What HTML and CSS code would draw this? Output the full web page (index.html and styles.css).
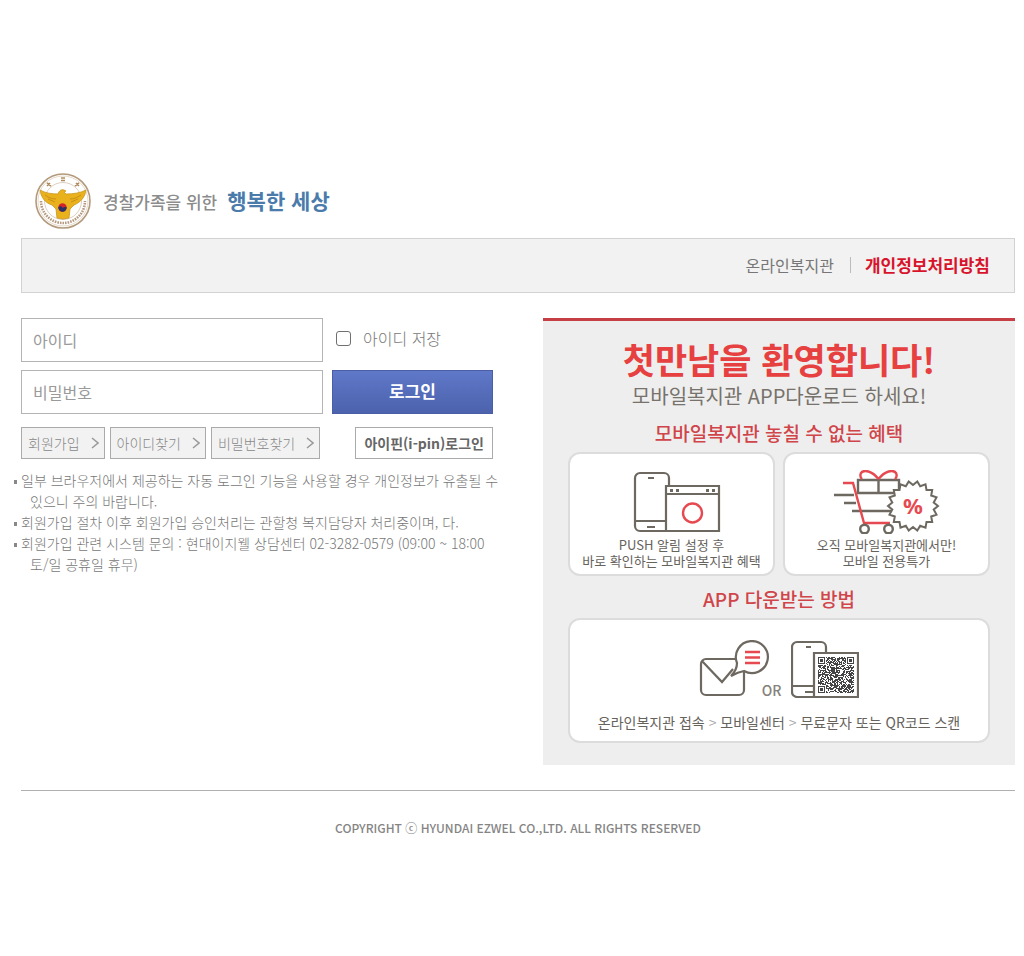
FILE: index.html
```html
<!DOCTYPE html>
<html lang="ko">
<head>
    <meta charset="UTF-8">
    <meta name="viewport" content="width=device-width, initial-scale=1.0">
    <title>경찰가족을 위한 행복한 세상</title>
    <link rel="stylesheet" href="styles.css">
</head>
<body>

    <header class="header">
        <h1 class="logo">
            <svg class="emblem" viewBox="0 0 56 56" aria-hidden="true">
                <circle cx="28" cy="28" r="27" fill="#fff" stroke="#b39a7c" stroke-width="1.6"/>
                <circle cx="28" cy="28" r="25" fill="none" stroke="#e6dac8" stroke-width="1"/>
                <circle cx="28" cy="28" r="18.5" fill="none" stroke="#dcd0c0" stroke-width="1"/>
                <path d="M6 28A22 22 0 0 0 50 28" fill="none" stroke="#b59a80" stroke-width="2.6" stroke-dasharray="1.6 1"/>
                <g fill="none" stroke="#b08a60" stroke-width="1.6">
                    <path d="M12 10l4 3M12 13l3-3M26 5h4M26 7.500h4M40 13l4-3M41 10l3 3"/>
                </g>
                <path d="M5 17c5 3 12 4 18 4 1-3 3-5 6-4l2 1-2 1 2 2c7 0 14-1 20-4-1 7-5 12-12 15l-4 4-1 9-6 1-6-1-1-9-4-4C10 30 6 24 5 17z" fill="#e9b21d" stroke="#c9951c" stroke-width=".8"/>
                <path d="M10 22c4 3 7 4 11 4M46 22c-4 3-8 4-11 4M13 26l7 3M43 26l-7 3" fill="none" stroke="#c98f16"/>
                <circle cx="27.500" cy="34.500" r="4.200" fill="#d2242b"/>
                <path d="M23.300 34.500a4.200 4.200 0 0 0 8.400 0c-2-2-3 1-4.200 0s-2-2-4.200 0z" fill="#2a3068"/>
            </svg>
            <span class="logo-text">경찰가족을 위한</span>
            <strong class="logo-name">행복한 세상</strong>
        </h1>
        <nav class="menu">
            <a href="#">온라인복지관</a>
            <a href="#" class="privacy">개인정보처리방침</a>
        </nav>
    </header>

    <main class="main">
        <section class="login">
            <form class="login-form">
                <input type="text" class="field" placeholder="아이디" aria-label="아이디">
                <label class="save-id"><input type="checkbox" class="check">아이디 저장</label>
                <input type="password" class="field" placeholder="비밀번호" aria-label="비밀번호">
                <button type="submit" class="btn-login">로그인</button>
            </form>

            <div class="links">
                <a href="#" class="btn-link">회원가입 <svg class="arrow" viewBox="0 0 8 12" aria-hidden="true"><path d="M1 1l6 5-6 5"/></svg></a>
                <a href="#" class="btn-link">아이디찾기 <svg class="arrow" viewBox="0 0 8 12" aria-hidden="true"><path d="M1 1l6 5-6 5"/></svg></a>
                <a href="#" class="btn-link">비밀번호찾기 <svg class="arrow" viewBox="0 0 8 12" aria-hidden="true"><path d="M1 1l6 5-6 5"/></svg></a>
                <button type="button" class="btn-ipin">아이핀(i-pin)로그인</button>
            </div>

            <ul class="notice">
                <li>일부 브라우저에서 제공하는 자동 로그인 기능을 사용할 경우 개인정보가 유출될 수 있으니 주의 바랍니다.</li>
                <li>회원가입 절차 이후 회원가입 승인처리는 관할청 복지담당자 처리중이며, 다.</li>
                <li>회원가입 관련 시스템 문의 : 현대이지웰 상담센터 02-3282-0579 (09:00 ~ 18:00 토/일 공휴일 휴무)</li>
            </ul>
        </section>

        <section class="promo">
            <h2 class="promo-title">첫만남을 환영합니다!</h2>
            <p class="promo-sub">모바일복지관 APP다운로드 하세요!</p>

            <h3 class="promo-head">모바일복지관 놓칠 수 없는 혜택</h3>
            <div class="cards">
                <div class="card">
                    <svg class="icon" width="98" height="62" viewBox="-10 0 98 62" aria-hidden="true">
                        <g fill="none" stroke="#6d6860" stroke-width="2.200">
                            <path d="M32 60H7a5 5 0 0 1-5-5V7a5 5 0 0 1 5-5h24a5 5 0 0 1 5 5v8M2 50h30M15 7h6M14 56h8"/>
                            <path d="M33 15h53v45H33zM33 23h53"/>
                        </g>
                        <path d="M37 18h3v3h-3zM43 18h3v3h-3zM73 18h3v3h-3zM79 18h3v3h-3z" fill="#6d6860"/>
                        <circle cx="59.500" cy="42" r="9.500" fill="none" stroke="#e64a50" stroke-width="2.400"/>
                    </svg>
                    <p>PUSH 알림 설정 후<br>바로 확인하는 모바일복지관 혜택</p>
                </div>
                <div class="card">
                    <svg class="icon" width="106" height="64" viewBox="0 0 106 64" aria-hidden="true">
                        <g fill="none" stroke="#6d6860" stroke-width="2.400">
                            <path d="M24 10h41v13H24zM44.500 10v13M0 25h20M10 33h12M18 41h40M24 23h36"/>
                        </g>
                        <path id="seal" fill="#fff" stroke="#6d6860" stroke-width="2"/>
                        <path d="M9 13h10l11 40h26" fill="none" stroke="#e64a50" stroke-width="2.400"/>
                        <path d="M44.500 9C38 1 30-1 27 3c-1 2-1 4 1 6M44.500 9C51 1 59-1 62 3c1 2 1 4-1 6" fill="none" stroke="#e64a50" stroke-width="2.400"/>
                        <circle cx="30.500" cy="59" r="4.300" fill="#fff" stroke="#6d6860" stroke-width="2.400"/>
                        <circle cx="54.500" cy="59" r="4.300" fill="#fff" stroke="#6d6860" stroke-width="2.400"/>
                        <text class="percent" x="79" y="44" text-anchor="middle">%</text>
                    </svg>
                    <p>오직 모바일복지관에서만!<br>모바일 전용특가</p>
                </div>
            </div>

            <h3 class="promo-head">APP 다운받는 방법</h3>
            <div class="card card-wide">
                <div class="ways">
                    <svg class="icon" width="72" height="58" viewBox="0 0 72 58" aria-hidden="true">
                        <g fill="none" stroke="#6d6860" stroke-width="2.200">
                            <path d="M38 19H7a5 5 0 0 0-5 5v26a5 5 0 0 0 5 5h33a5 5 0 0 0 5-5V29M3 21l20 21 11-13"/>
                            <path d="M38 23A16 16 0 1 1 45 31Q39 32 32 36 38 30 38 23z" fill="#fff"/>
                        </g>
                        <path d="M46 12h15M46 17.500h15M46 23h15" stroke="#e64a50" stroke-width="2.600"/>
                    </svg>
                    <span class="or">OR</span>
                    <svg class="icon" width="68" height="58" viewBox="0 0 68 58" aria-hidden="true">
                        <g fill="none" stroke="#6d6860" stroke-width="2.200">
                            <path d="M23 57H6a5 5 0 0 1-5-5V7a5 5 0 0 1 5-5h24a5 5 0 0 1 5 5v6M1 46h21M15 7h5M14 52h8"/>
                            <path d="M23 13h44v44H23z" fill="#fff"/>
                        </g>
                        <path id="qr" fill="#444" shape-rendering="crispEdges"/>
                    </svg>
                </div>
                <p>온라인복지관 접속 <span class="gt">&gt;</span> 모바일센터 <span class="gt">&gt;</span> 무료문자 또는 QR코드 스캔</p>
            </div>
        </section>
    </main>

    <footer class="footer">COPYRIGHT ⓒ HYUNDAI EZWEL CO.,LTD. ALL RIGHTS RESERVED</footer>

    <script src="script.js"></script>
</body>
</html>
```
FILE: styles.css
```css
* {
    box-sizing: border-box;
}
body {
    margin: 0;
    padding: 173px 9px 0 21px;
    background: #fff;
    color: #777;
    font-family: "Noto Sans CJK KR", "Noto Sans", sans-serif;
    font-size: 14px;
}
h1, h2, h3, p, ul {
    margin: 0;
    padding: 0;
}
a {
    color: inherit;
    text-decoration: none;
}
input, button {
    font-family: inherit;
}

/* header */
.logo {
    display: flex;
    align-items: center;
    height: 65px;
    padding: 0 0 9px 14px;
    font-weight: 500;
}
.emblem {
    width: 56px;
    height: 56px;
}
.logo-text {
    margin-left: 12px;
    font-size: 17px;
    color: #8c8c8c;
}
.logo-name {
    margin-left: 10px;
    font-size: 21px;
    line-height: 28px;
    padding-bottom: 3px;
    color: #4a7bab;
}
.menu {
    display: flex;
    justify-content: flex-end;
    align-items: center;
    height: 55px;
    padding: 0 24px 2px;
    background: #f2f2f2;
    border: 1px solid #d2d2d2;
    font-size: 16px;
    line-height: 16px;
}
.privacy {
    margin-left: 16px;
    padding-left: 14px;
    border-left: 1px solid #bbb;
    color: #d8142c;
    font-size: 17px;
    font-weight: bold;
}

/* login */
.main {
    display: grid;
    grid-template-columns: 1fr 1fr;
    gap: 50px;
    align-items: start;
    margin-top: 25px;
}
.login-form {
    display: grid;
    grid-template-columns: 1fr 161px;
    gap: 8px 9px;
}
.field {
    width: 100%;
    height: 44px;
    padding: 0 11px;
    border: 1px solid #b4b4b4;
    font-size: 16px;
}
.field::placeholder {
    color: #9a9a9a;
}
.save-id {
    display: flex;
    align-items: center;
    gap: 12px;
    height: 40px;
    font-size: 16px;
    font-weight: 300;
}
.check {
    appearance: none;
    width: 15px;
    height: 15px;
    margin: 0 0 0 4px;
    border: 1px solid #707070;
    border-radius: 3px;
    background: #fff;
}
.check:checked {
    background: #5268b8;
}
.btn-login {
    height: 44px;
    padding: 0 0 4px;
    border: 1px solid #4a5da6;
    background: linear-gradient(#5f78c8, #4c62ad);
    color: #fff;
    font-size: 17px;
    font-weight: bold;
}
.links {
    display: flex;
    gap: 5px;
    margin-top: 13px;
}
.btn-link, .btn-ipin {
    display: flex;
    align-items: center;
    height: 32px;
    padding: 0 5px 0 6px;
    border: 1px solid #aaa;
    background: #f2f2f2;
    color: #888;
    font-size: 14px;
    font-weight: 300;
    white-space: nowrap;
}
.arrow {
    width: 8px;
    height: 12px;
    margin-left: 11px;
    fill: none;
    stroke: #999;
    stroke-width: 1.5;
}
.btn-ipin {
    margin-left: auto;
    padding: 0 8px;
    background: #fff;
    color: #666;
    font-weight: bold;
}
.notice {
    margin: 11px -10px 0 -7px;
    list-style: none;
    line-height: 21px;
    font-weight: 300;
    word-break: keep-all;
}
.notice li {
    padding-left: 16px;
    text-indent: -16px;
}
.notice li::before {
    content: "";
    display: inline-block;
    width: 3px;
    height: 4px;
    margin-right: 4px;
    background: #888;
    vertical-align: 2px;
}

/* app promotion */
.promo {
    padding: 15px 25px 22px;
    background: #eee;
    border-top: 3px solid #c63f45;
    text-align: center;
}
.promo-title {
    font-size: 35px;
    line-height: 46px;
    color: #e64040;
}
.promo-sub {
    font-size: 20px;
    line-height: 28px;
    color: #77726b;
}
.promo-head {
    padding: 6px 0 2px;
    font-size: 19px;
    font-weight: 500;
    line-height: 34px;
    color: #d0454a;
}
.cards {
    display: grid;
    grid-template-columns: 1fr 1fr;
    gap: 8px;
}
.card {
    min-height: 124px;
    padding-top: 16px;
    background: #fff;
    border: 2px solid #dcdcdc;
    border-radius: 12px;
    font-size: 13px;
    line-height: 16px;
    color: #66625c;
}
.card .icon {
    display: block;
    height: 64px;
    margin: 0 auto 3px;
}
.percent {
    font-family: "Noto Sans", sans-serif;
    font-size: 22px;
    font-weight: bold;
    fill: #e64a50;
}
.card-wide {
    min-height: 125px;
    padding-top: 20px;
    font-size: 14px;
}
.ways {
    display: flex;
    justify-content: center;
    align-items: flex-end;
    margin-bottom: 16px;
}
.ways .icon {
    height: 58px;
    margin: 0;
}
.or {
    margin: 0 10px 0 -9px;
    font-weight: 500;
    color: #85817a;
}
.gt {
    color: #aaa;
}

.footer {
    margin-top: 25px;
    padding-top: 27px;
    border-top: 1px solid #b0b0b0;
    text-align: center;
    font-size: 12px;
    font-weight: 500;
    line-height: 20px;
    color: #858585;
}
```
FILE: script.js
```js
// Zigzag edge of the discount seal
function drawSeal() {
    let d = "";
    for (let i = 0; i < 36; i++) {
        const r = i % 2 ? 21 : 25;
        const a = i * Math.PI / 18;
        d += (i ? "L" : "M") + (79 + r * Math.cos(a)).toFixed(1) + " " + (36 + r * Math.sin(a)).toFixed(1);
    }
    document.getElementById("seal").setAttribute("d", d + "z");
}

// QR modules, with the finder squares in three corners
function drawQr() {
    const n = 36;
    let seed = 7;
    let d = "";
    for (let y = 0; y < n; y++) {
        for (let x = 0; x < n; x++) {
            seed = (seed * 1103515245 + 12345) % 2147483648;
            let on = seed / 2147483648 < 0.6;
            const fx = x < 8 ? x : n - 1 - x;
            const fy = y < 8 ? y : n - 1 - y;
            if (fx < 8 && fy < 8 && !(x > 8 && y > 8)) {
                const ring = Math.max(Math.abs(fx - 3), Math.abs(fy - 3));
                on = ring === 3 || ring < 2;
            }
            if (on) d += "M" + (27 + x) + " " + (17 + y) + "h1v1h-1z";
        }
    }
    document.getElementById("qr").setAttribute("d", d);
}

drawSeal();
drawQr();
```
